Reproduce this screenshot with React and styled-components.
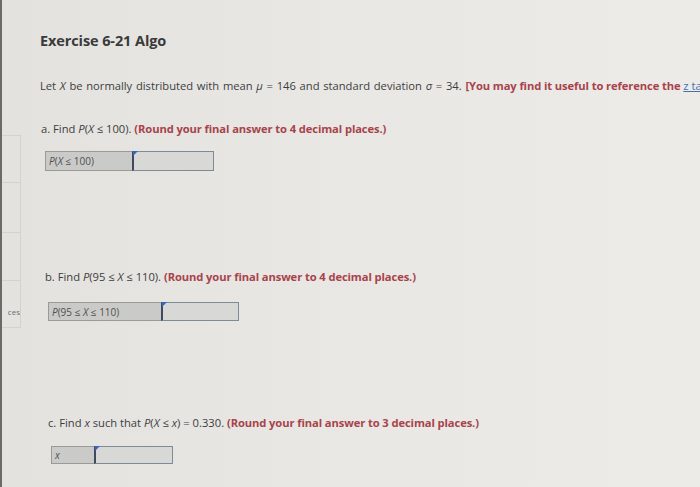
import React from "react";
import styled, { createGlobalStyle } from "styled-components";

const GlobalStyle = createGlobalStyle`
  html, body {
    margin: 0;
    padding: 0;
    width: 700px;
    height: 487px;
    overflow: hidden;
  }
  body {
    background: linear-gradient(90deg, #e3e2df 0%, #e8e7e4 45%, #ecebe8 100%);
    font-family: "Open Sans", Lato, sans-serif;
    color: #3b3b3b;
  }
`;

const Page = styled.div`
  display: flex;
  height: 487px;
  border-left: 2px solid #6c6a67;
  box-sizing: border-box;
`;

const Sidebar = styled.aside`
  width: 19px;
  flex-shrink: 0;
  display: flex;
  flex-direction: column;
  padding-top: 135px;
`;

const SideCell = styled.div`
  height: ${(p) => p.h}px;
  border-right: 1px solid #d3d2cf;
  border-bottom: 1px solid #d3d2cf;
  &:first-child {
    border-top: 1px solid #d3d2cf;
  }
  display: flex;
  align-items: flex-end;
  padding-bottom: 10px;
  box-sizing: border-box;
  font-size: 8px;
  color: #6e6e6e;
  overflow: hidden;
  white-space: nowrap;
  justify-content: flex-end;
`;

const Content = styled.main`
  flex: 1;
  padding: 31px 0 0 19px;
  white-space: nowrap;
  overflow: hidden;
`;

const Title = styled.h1`
  margin: 0 0 27px;
  font-size: 14.5px;
  font-weight: 700;
  color: #3a3a3a;
  line-height: 20px;
  letter-spacing: -0.1px;
`;

const Line = styled.p`
  margin: 0;
  margin-left: ${(p) => p.indent || 0}px;
  font-size: 11.2px;
  line-height: 16px;
  color: #3d3d3d;
`;

const Plain = styled.span`
  word-spacing: 0.8px;
`;

const Red = styled.span`
  color: #a8434b;
  font-weight: 700;
  letter-spacing: -0.1px;
`;

const Link = styled.a`
  color: #4a6fb0;
  text-decoration: underline;
`;

const I = styled.i`
  font-style: italic;
`;

const Section = styled.section`
  margin-top: ${(p) => p.top}px;
`;

const AnswerRow = styled.div`
  display: flex;
  margin-top: ${(p) => p.top}px;
  margin-left: ${(p) => p.indent}px;
  height: ${(p) => p.h}px;
`;

const LabelCell = styled.div`
  width: ${(p) => p.w}px;
  box-sizing: border-box;
  background: #cacac8;
  border: 1px solid #9a9a99;
  border-right: none;
  font-size: 10px;
  color: #505050;
  display: flex;
  align-items: center;
  padding-left: 3px;
`;

const InputCell = styled.div`
  position: relative;
  width: ${(p) => p.w}px;
  box-sizing: border-box;
  background: #d8d8d6;
  border: 1px solid #7f8a99;
  border-left: 2px solid #3f4a5e;
`;

const Tick = styled.span`
  position: absolute;
  left: -1px;
  top: -1px;
  width: 0;
  height: 0;
  border-top: 5px solid #3566c4;
  border-right: 5px solid transparent;
`;

const Answer = ({ label, labelW, inputW, top, indent, h }) => (
  <AnswerRow top={top} indent={indent} h={h}>
    <LabelCell w={labelW}>{label}</LabelCell>
    <InputCell w={inputW}>
      <Tick />
    </InputCell>
  </AnswerRow>
);

const App = () => (
  <>
    <GlobalStyle />
    <Page>
      <Sidebar>
        <SideCell h={48} />
        <SideCell h={50} />
        <SideCell h={48} />
        <SideCell h={47}>ces</SideCell>
      </Sidebar>
      <Content>
        <Title>Exercise 6-21 Algo</Title>
        <Line>
          <Plain>
            Let <I>X</I> be normally distributed with mean <I>μ</I> = 146 and
            standard deviation <I>σ</I> = 34.{" "}
          </Plain>
          <Red>[You may find it useful to reference the </Red>
          <Link>z table</Link>
        </Line>

        <Section top={27}>
          <Line indent={1}>
            a. Find <I>P</I>(<I>X</I> ≤ 100). <Red>(Round your final answer to 4 decimal places.)</Red>
          </Line>
          <Answer
            top={14}
            indent={5}
            h={20}
            labelW={87}
            inputW={82}
            label={<span><I>P</I>(<I>X</I> ≤ 100)</span>}
          />
        </Section>

        <Section top={98}>
          <Line indent={5}>
            b. Find <I>P</I>(95 ≤ <I>X</I> ≤ 110). <Red>(Round your final answer to 4 decimal places.)</Red>
          </Line>
          <Answer
            top={17}
            indent={8}
            h={19}
            labelW={113}
            inputW={78}
            label={<span><I>P</I>(95 ≤ <I>X</I> ≤ 110)</span>}
          />
        </Section>

        <Section top={94}>
          <Line indent={8}>
            c. Find <I>x</I> such that <I>P</I>(<I>X</I> ≤ <I>x</I>) = 0.330. <Red>(Round your final answer to 3 decimal places.)</Red>
          </Line>
          <Answer
            top={15}
            indent={11}
            h={18}
            labelW={43}
            inputW={79}
            label={<I>x</I>}
          />
        </Section>
      </Content>
    </Page>
  </>
);

export default App;
